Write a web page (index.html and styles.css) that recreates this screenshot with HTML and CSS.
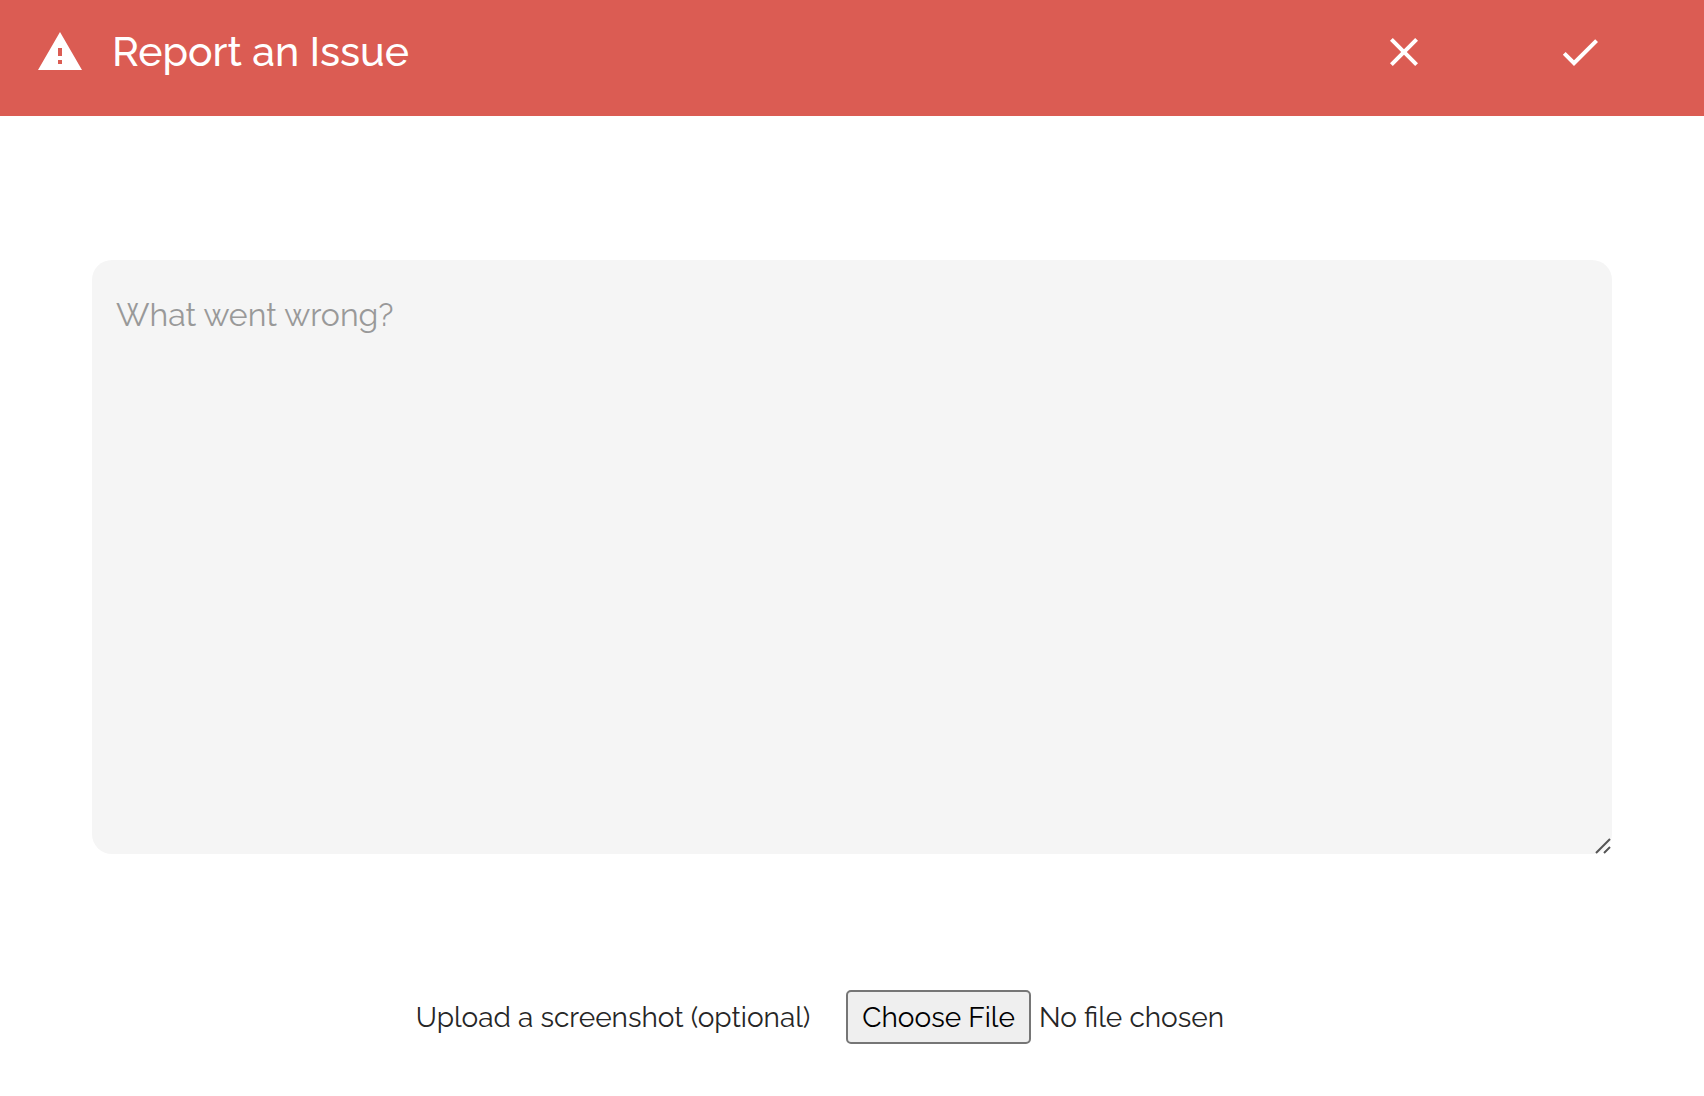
FILE: index.html
```html
<!DOCTYPE html>
<html lang="en">
<head>
    <meta charset="UTF-8">
    <title>Report an Issue</title>
    <link rel="stylesheet" href="styles.css">
</head>
<body>
    <form class="report">
        <header class="header">
            <svg class="icon" viewBox="0 0 24 24" aria-hidden="true">
                <path d="M1 21h22L12 2 1 21zm12-3h-2v-2h2v2zm0-4h-2v-4h2v4z"/>
            </svg>
            <h1>Report an Issue</h1>
            <div class="actions">
                <button type="reset" aria-label="Cancel">
                    <svg class="icon" viewBox="0 0 24 24" aria-hidden="true">
                        <path d="M19 6.41L17.59 5 12 10.59 6.41 5 5 6.41 10.59 12 5 17.59 6.41 19 12 13.41 17.59 19 19 17.59 13.41 12z"/>
                    </svg>
                </button>
                <button type="submit" aria-label="Send">
                    <svg class="icon" viewBox="0 0 24 24" aria-hidden="true">
                        <path d="M9 16.17L4.83 12l-1.42 1.41L9 19 21 7l-1.41-1.41z"/>
                    </svg>
                </button>
            </div>
        </header>

        <main class="content">
            <div class="message">
                <textarea name="message" placeholder="What went wrong?" aria-label="What went wrong?"></textarea>
                <svg class="grip" viewBox="0 0 16 16" aria-hidden="true">
                    <path d="M1 15L15 1M9 15l6-6"/>
                </svg>
            </div>

            <div class="upload">
                <label for="screenshot">Upload a screenshot (optional)</label>
                <input type="file" id="screenshot" name="screenshot" accept="image/*">
            </div>
        </main>
    </form>
</body>
</html>
```

FILE: styles.css
```css
* {
    box-sizing: border-box;
}
body {
    margin: 0;
    background: white;
    color: #262626;
    font-family: Raleway, Lato, sans-serif;
    font-size: 28px;
}
.header {
    display: flex;
    align-items: center;
    height: 116px;
    padding: 0 36px 12px;
    background: #db5c53;
    color: white;
}
.icon {
    display: block;
    width: 48px;
    height: 48px;
    fill: currentColor;
}
h1 {
    margin: 0 0 0 28px;
    font-size: 41px;
    font-weight: 500;
    line-height: 48px;
}
.actions {
    display: flex;
    margin-left: auto;
}
.actions button {
    display: flex;
    justify-content: center;
    width: 176px;
    padding: 0;
    border: none;
    background: none;
    color: inherit;
    cursor: pointer;
}
.content {
    padding: 144px 92px 0;
}
.message {
    position: relative;
}
textarea {
    display: block;
    width: 100%;
    height: 594px;
    padding: 36px 24px;
    border: none;
    border-radius: 20px;
    background: #f5f5f5;
    color: inherit;
    font-family: inherit;
    font-size: 32px;
    line-height: 38px;
    resize: none;
}
textarea::placeholder {
    color: #999;
}
.grip {
    position: absolute;
    right: 1px;
    bottom: 0;
    width: 16px;
    height: 16px;
    fill: none;
    stroke: #555;
    stroke-width: 2;
    pointer-events: none;
}
.upload {
    display: flex;
    justify-content: center;
    align-items: center;
    gap: 36px;
    margin-top: 136px;
}
.upload input {
    width: 442px;
    color: inherit;
    font: inherit;
}
.upload input::file-selector-button {
    height: 54px;
    margin-right: 8px;
    padding: 0 14px;
    border: 2px solid #767676;
    border-radius: 5px;
    background: #efefef;
    color: black;
    font: inherit;
}
```
